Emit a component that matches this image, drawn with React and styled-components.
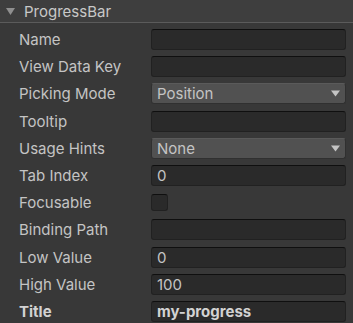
import React from "react";
import styled, { createGlobalStyle } from "styled-components";

const Global = createGlobalStyle`
  html, body { margin: 0; padding: 0; background: #383838; }
  body { font-family: Inter, "Noto Sans", sans-serif; width: 353px; height: 323px; overflow: hidden; }
`;

const Panel = styled.div`
  width: 353px;
  height: 323px;
  background: #383838;
  color: #c4c4c4;
  overflow: hidden;
`;

const Header = styled.div`
  height: 22px;
  display: flex;
  align-items: center;
  gap: 9px;
  padding-left: 6px;
  background: #3e3e3e;
  border-bottom: 1px solid #5b5b5b;
  font-size: 15px;
  color: #c8c8c8;
`;

const Arrow = styled.svg`
  width: 9px;
  height: 7px;
  display: block;
`;

const Body = styled.div`
  padding-top: 3px;
`;

const Row = styled.div`
  height: 27.2px;
  display: flex;
  align-items: center;
  padding-left: 19px;
  padding-right: 7px;
`;

const Label = styled.div`
  width: 132px;
  font-size: 15px;
  font-weight: ${(p) => (p.$bold ? 700 : 400)};
  color: ${(p) => (p.$bold ? "#d2d2d2" : "#c4c4c4")};
  white-space: nowrap;
`;

const Field = styled.div`
  flex: 1;
  height: 21px;
  box-sizing: border-box;
  background: #2a2a2a;
  border: 1px solid #212121;
  border-top-color: #0f0f0f;
  border-radius: 3px;
  display: flex;
  align-items: center;
  padding-left: 5px;
  font-size: 15px;
  font-weight: ${(p) => (p.$bold ? 700 : 400)};
  color: ${(p) => (p.$bold ? "#d2d2d2" : "#c4c4c4")};
`;

const Dropdown = styled.div`
  flex: 1;
  height: 21px;
  box-sizing: border-box;
  background: #515151;
  border: 1px solid #303030;
  border-top-color: #5a5a5a;
  border-radius: 3px;
  display: flex;
  align-items: center;
  justify-content: space-between;
  padding: 0 5px 0 5px;
  font-size: 15px;
  color: #c4c4c4;
`;

const Check = styled.div`
  width: 17px;
  height: 17px;
  box-sizing: border-box;
  background: #2a2a2a;
  border: 1px solid #212121;
  border-top-color: #0f0f0f;
  border-radius: 3px;
`;

const rows = [
  { label: "Name", type: "text" },
  { label: "View Data Key", type: "text" },
  { label: "Picking Mode", type: "drop", value: "Position" },
  { label: "Tooltip", type: "text" },
  { label: "Usage Hints", type: "drop", value: "None" },
  { label: "Tab Index", type: "text", value: "0" },
  { label: "Focusable", type: "check" },
  { label: "Binding Path", type: "text" },
  { label: "Low Value", type: "text", value: "0" },
  { label: "High Value", type: "text", value: "100" },
  { label: "Title", type: "text", value: "my-progress", bold: true },
];

export default function App() {
  return (
    <Panel>
      <Global />
      <Header>
        <Arrow viewBox="0 0 9 7">
          <path d="M0 0 H9 L4.5 7 Z" fill="#8f8f8f" />
        </Arrow>
        <span>ProgressBar</span>
      </Header>
      <Body>
        {rows.map((r) => (
          <Row key={r.label}>
            <Label $bold={r.bold}>{r.label}</Label>
            {r.type === "text" && <Field $bold={r.bold}>{r.value}</Field>}
            {r.type === "drop" && (
              <Dropdown>
                <span>{r.value}</span>
                <Arrow viewBox="0 0 9 6">
                  <path d="M0 0 H9 L4.5 6 Z" fill="#c4c4c4" />
                </Arrow>
              </Dropdown>
            )}
            {r.type === "check" && <Check />}
          </Row>
        ))}
      </Body>
    </Panel>
  );
}
